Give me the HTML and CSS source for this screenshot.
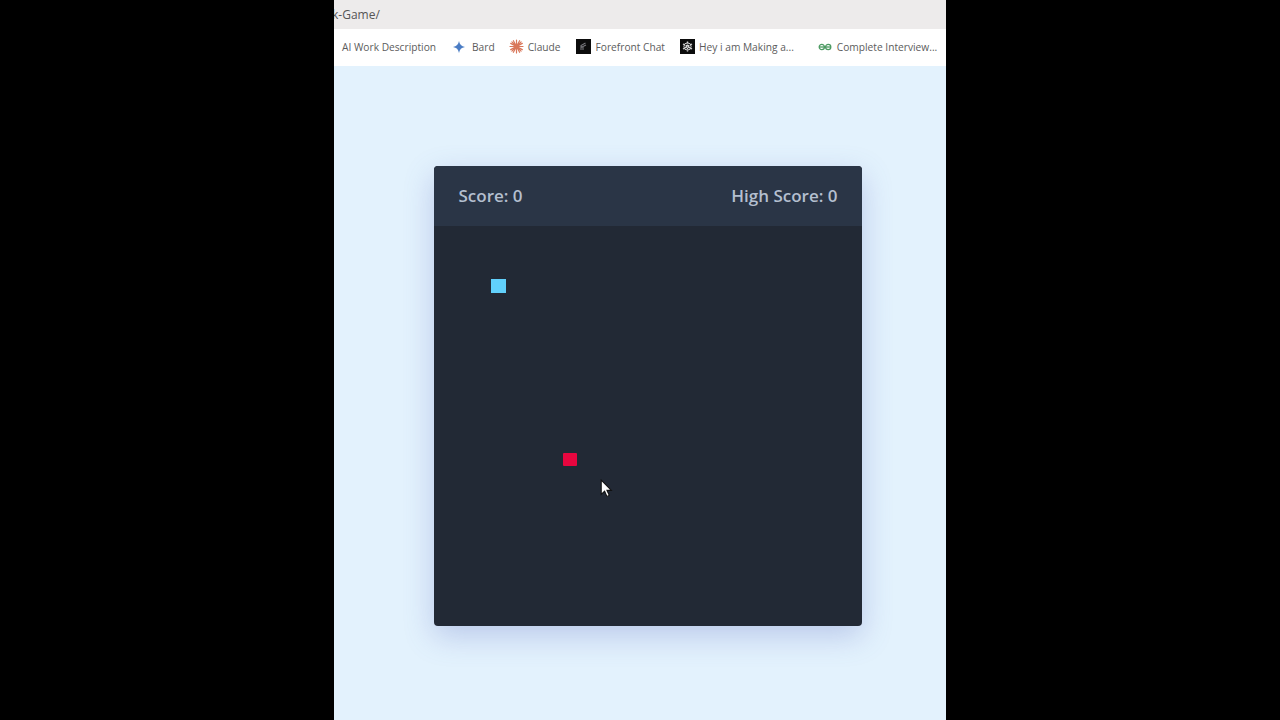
FILE: index.html
```html
<!DOCTYPE html>
<html lang="en">
<head>
  <meta charset="UTF-8">
  <meta name="viewport" content="width=device-width, initial-scale=1.0">
  <title>Snake Game</title>
  <link rel="stylesheet" href="styles.css">
</head>
<body>

  <div class="browser">
    <div class="address-bar"><span class="url">k-Game/</span></div>

    <nav class="bookmarks">
      <a class="bookmark first" href="#">AI Work Description</a>
      <a class="bookmark bard" href="#">
        <svg width="14" height="14" viewBox="0 0 14 14"><path d="M7 1C7.6 4.6 9.4 6.4 13 7 9.4 7.6 7.6 9.4 7 13 6.4 9.4 4.6 7.6 1 7 4.6 6.4 6.4 4.6 7 1Z" fill="#4a7cc4"/></svg>
        Bard
      </a>
      <a class="bookmark claude" href="#">
        <svg width="15" height="15" viewBox="0 0 15 15" stroke="#d9775a" stroke-width="1.2" stroke-linecap="round"><path d="M7.5 1V14M1 7.5H14M2.9 2.9 12.1 12.1M12.1 2.9 2.9 12.1M4.4 1.7 10.6 13.3M10.6 1.7 4.4 13.3M1.7 4.4 13.3 10.6M13.3 4.4 1.7 10.6"/></svg>
        Claude
      </a>
      <a class="bookmark forefront" href="#">
        <svg width="15" height="15" viewBox="0 0 15 15"><rect width="15" height="15" fill="#0c0c0c"/><path d="M5 11V6.5L9.5 4M5 8.5 10 6M7 11V8" fill="none" stroke="#77777c" stroke-width="1.1"/></svg>
        Forefront Chat
      </a>
      <a class="bookmark hey" href="#">
        <svg width="15" height="15" viewBox="0 0 15 15"><rect width="15" height="15" fill="#0c0c0c"/><path d="M7.5 2.5V12.5M3 5 12 10M12 5 3 10" stroke="#d5d5d5" stroke-width="1.4" stroke-dasharray="2 1"/><circle cx="7.5" cy="7.5" r="3.6" fill="none" stroke="#d5d5d5"/></svg>
        Hey i am Making a...
      </a>
      <a class="bookmark gfg" href="#">
        <svg width="14" height="8" viewBox="0 0 14 8" fill="none" stroke="#4c9a62" stroke-width="1.3"><circle cx="3.8" cy="4" r="2.6"/><circle cx="10.2" cy="4" r="2.6"/><path d="M1.2 4H12.8"/></svg>
        Complete Interview...
      </a>
    </nav>

    <main class="page">
      <section class="game">
        <header class="score-bar">
          <span>Score: 0</span>
          <span>High Score: 0</span>
        </header>
        <div class="board">
          <div class="snake"></div>
          <div class="food"></div>
        </div>
      </section>

      <svg class="cursor" width="13" height="19" viewBox="0 0 12 18"><path d="M1 1V14.5L4.2 11.6 6.4 16.5 8.6 15.5 6.4 10.8H10.6Z" fill="#fff" stroke="#111" stroke-width="1"/></svg>
    </main>
  </div>

</body>
</html>
```

FILE: styles.css
```css
* { box-sizing: border-box; }

body {
  margin: 0;
  height: 720px;
  overflow: hidden;
  background: #000;
  font-family: "Open Sans", "Noto Sans", sans-serif;
}

.browser {
  position: relative;
  width: 612px;
  height: 720px;
  margin: 0 auto;
  display: flex;
  flex-direction: column;
}

.address-bar {
  height: 29px;
  padding-top: 6px;
  background: #edebeb;
  overflow: hidden;
  font-size: 12px;
  line-height: 17px;
  color: #555;
}
.url { display: block; margin-left: -2px; }

.bookmarks {
  height: 37px;
  background: #fff;
  display: flex;
  align-items: center;
  padding: 0 0 2px 8px;
  font-size: 10.2px;
  white-space: nowrap;
  overflow: hidden;
}
.bookmark {
  display: flex;
  align-items: center;
  gap: 5px;
  color: #5c5c5c;
  text-decoration: none;
}
.bard { margin-left: 16px; gap: 6px; }
.claude { margin-left: 14px; gap: 4px; }
.forefront { margin-left: 15px; }
.hey { margin-left: 15px; gap: 4px; }
.gfg { margin-left: 24px; }

.page {
  flex: 1;
  background: #e3f2fd;
  padding: 99.5px 0 0 100px;
}

.game {
  width: 428px;
  border-radius: 4px;
  overflow: hidden;
  background: #222935;
  box-shadow: 0 10px 30px rgba(92, 107, 192, 0.3);
}

.score-bar {
  height: 60px;
  padding: 0 24.5px;
  background: #2a3546;
  color: #b4bfcf;
  font-size: 17px;
  font-weight: 600;
  display: flex;
  justify-content: space-between;
  align-items: center;
}

.board {
  position: relative;
  height: 400px;
}

.snake {
  position: absolute;
  left: 57px;
  top: 53px;
  width: 15px;
  height: 14px;
  background: #61d0fb;
}

.food {
  position: absolute;
  left: 129px;
  top: 227px;
  width: 14px;
  height: 13px;
  border-radius: 1px;
  background: #e8063f;
}

.cursor {
  position: absolute;
  left: 266px;
  top: 479px;
}
```
